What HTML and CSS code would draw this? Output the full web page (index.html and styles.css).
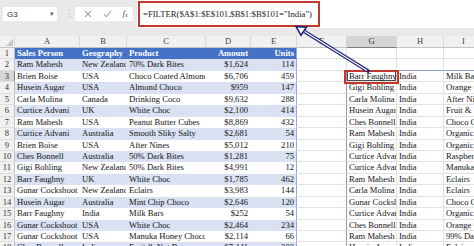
FILE: index.html
```html
<!DOCTYPE html>
<html>
<head>
<meta charset="utf-8">
<link rel="stylesheet" href="styles.css">
</head>
<body>
<div class="toolbar">
  <div class="namebox"><span>G3</span><span class="dd">&#9662;</span></div>
  <div class="sep">&#8942;</div>
  <div class="fnbtns">
    <svg width="8" height="8" viewBox="0 0 8 8"><path d="M1 1L7 7M7 1L1 7" stroke="#a8a8a8" stroke-width="1.1" fill="none"/></svg>
    <svg width="9" height="8" viewBox="0 0 9 8"><path d="M1 4.2L3.4 6.6L8 1.2" stroke="#a8a8a8" stroke-width="1.1" fill="none"/></svg>
    <span class="fx">f<sub>x</sub></span>
  </div>
  <div class="formula"><div class="fbox">=FILTER($A$1:$E$101,$B$1:$B$101="India")</div></div>
</div>
<div class="sheet">
  <div class="ch corner"><svg width="7" height="7" viewBox="0 0 7 7"><path d="M7 0V7H0Z" fill="#c4c4c4"/></svg></div>
  <div class="ch">A</div><div class="ch">B</div><div class="ch">C</div><div class="ch">D</div><div class="ch">E</div><div class="ch">F</div><div class="ch csel">G</div><div class="ch">H</div><div class="ch">I</div>

  <div class="rn">1</div><div class="c h">Sales Person</div><div class="c h">Geography</div><div class="c h">Product</div><div class="c h r">Amount</div><div class="c h r e">Units</div><div class="c"></div><div class="c"></div><div class="c"></div><div class="c"></div>

  <div class="rn">2</div><div class="c t b">Ram Mahesh</div><div class="c t b">New Zealand</div><div class="c t b">70% Dark Bites</div><div class="c t b r">$1,624</div><div class="c t b r e">114</div><div class="c"></div><div class="c spb"></div><div class="c spb"></div><div class="c spb"></div>

  <div class="rn rsel">3</div><div class="c t">Brien Boise</div><div class="c t">USA</div><div class="c t">Choco Coated Almonds</div><div class="c t r">$6,706</div><div class="c t r e">459</div><div class="c sp"></div><div class="c gsel">Barr Faughny</div><div class="c">India</div><div class="c">Milk Bars</div>

  <div class="rn">4</div><div class="c t b">Husein Augar</div><div class="c t b">USA</div><div class="c t b">Almond Choco</div><div class="c t b r">$959</div><div class="c t b r e">147</div><div class="c sp"></div><div class="c">Gigi Bohling</div><div class="c">India</div><div class="c">Orange Choco</div>

  <div class="rn">5</div><div class="c t">Carla Molina</div><div class="c t">Canada</div><div class="c t">Drinking Coco</div><div class="c t r">$9,632</div><div class="c t r e">288</div><div class="c sp"></div><div class="c">Carla Molina</div><div class="c">India</div><div class="c">After Nines</div>

  <div class="rn">6</div><div class="c t b">Curtice Advani</div><div class="c t b">UK</div><div class="c t b">White Choc</div><div class="c t b r">$2,100</div><div class="c t b r e">414</div><div class="c sp"></div><div class="c">Husein Augar</div><div class="c">India</div><div class="c">Fruit &amp; Nut Bars</div>

  <div class="rn">7</div><div class="c t">Ram Mahesh</div><div class="c t">USA</div><div class="c t">Peanut Butter Cubes</div><div class="c t r">$8,869</div><div class="c t r e">432</div><div class="c sp"></div><div class="c">Ches Bonnell</div><div class="c">India</div><div class="c">Choco Coated</div>

  <div class="rn">8</div><div class="c t b">Curtice Advani</div><div class="c t b">Australia</div><div class="c t b">Smooth Sliky Salty</div><div class="c t b r">$2,681</div><div class="c t b r e">54</div><div class="c sp"></div><div class="c">Ram Mahesh</div><div class="c">India</div><div class="c">Organic Choco</div>

  <div class="rn">9</div><div class="c t">Brien Boise</div><div class="c t">USA</div><div class="c t">After Nines</div><div class="c t r">$5,012</div><div class="c t r e">210</div><div class="c sp"></div><div class="c">Gigi Bohling</div><div class="c">India</div><div class="c">Organic Choco</div>

  <div class="rn">10</div><div class="c t b">Ches Bonnell</div><div class="c t b">Australia</div><div class="c t b">50% Dark Bites</div><div class="c t b r">$1,281</div><div class="c t b r e">75</div><div class="c sp"></div><div class="c">Curtice Advani</div><div class="c">India</div><div class="c">Raspberry Choco</div>

  <div class="rn">11</div><div class="c t">Gigi Bohling</div><div class="c t">New Zealand</div><div class="c t">50% Dark Bites</div><div class="c t r">$4,991</div><div class="c t r e">12</div><div class="c sp"></div><div class="c">Curtice Advani</div><div class="c">India</div><div class="c">Manuka Honey</div>

  <div class="rn">12</div><div class="c t b">Barr Faughny</div><div class="c t b">UK</div><div class="c t b">White Choc</div><div class="c t b r">$1,785</div><div class="c t b r e">462</div><div class="c sp"></div><div class="c">Ram Mahesh</div><div class="c">India</div><div class="c">Eclairs</div>

  <div class="rn">13</div><div class="c t">Gunar Cockshoot</div><div class="c t">New Zealand</div><div class="c t">Eclairs</div><div class="c t r">$3,983</div><div class="c t r e">144</div><div class="c sp"></div><div class="c">Carla Molina</div><div class="c">India</div><div class="c">Eclairs</div>

  <div class="rn">14</div><div class="c t b">Husein Augar</div><div class="c t b">Australia</div><div class="c t b">Mint Chip Choco</div><div class="c t b r">$2,646</div><div class="c t b r e">120</div><div class="c sp"></div><div class="c">Gunar Cockshoot</div><div class="c">India</div><div class="c">Choco Coated</div>

  <div class="rn">15</div><div class="c t">Barr Faughny</div><div class="c t">India</div><div class="c t">Milk Bars</div><div class="c t r">$252</div><div class="c t r e">54</div><div class="c sp"></div><div class="c">Curtice Advani</div><div class="c">India</div><div class="c">Organic Choco</div>

  <div class="rn">16</div><div class="c t b">Gunar Cockshoot</div><div class="c t b">USA</div><div class="c t b">White Choc</div><div class="c t b r">$2,464</div><div class="c t b r e">234</div><div class="c sp"></div><div class="c">Ches Bonnell</div><div class="c">India</div><div class="c">Orange Choco</div>

  <div class="rn">17</div><div class="c t">Gunar Cockshoot</div><div class="c t">USA</div><div class="c t">Manuka Honey Choco</div><div class="c t r">$2,114</div><div class="c t r e">66</div><div class="c sp"></div><div class="c">Ram Mahesh</div><div class="c">India</div><div class="c">99% Dark &amp; Pure</div>

  <div class="rn">18</div><div class="c t b">Ches Bonnell</div><div class="c t b">India</div><div class="c t b">Fruit &amp; Nut Bars</div><div class="c t b r">$7,441</div><div class="c t b r e">303</div><div class="c sp"></div><div class="c">Husein Augar</div><div class="c">India</div><div class="c">Eclairs</div>
</div>
<svg class="arrow" width="474" height="246" viewBox="0 0 474 246">
  <path d="M368 71L302 30" stroke="#1c237a" stroke-width="3.6" fill="none" stroke-linecap="round"/>
  <path d="M367 70.4L303 30.6" stroke="#ffffff" stroke-width="1.2" fill="none"/>
  <path d="M306.5 27.2L296 26.5L301 35.3Z" fill="#ffffff" stroke="#1c237a" stroke-width="1.6" stroke-linejoin="miter"/>
</svg>
</body>
</html>
```

FILE: styles.css
```css
html, body {
  margin: 0;
  padding: 0;
}
body {
  width: 474px;
  height: 246px;
  overflow: hidden;
  background: #ffffff;
  font-family: "Liberation Serif", "Times New Roman", serif;
  position: relative;
}

.toolbar {
  height: 36px;
  background: #e9e9e9;
  display: flex;
  align-items: flex-start;
}
.namebox {
  margin: 7px 0 0 3px;
  width: 54px;
  height: 14px;
  background: #ffffff;
  display: flex;
  align-items: center;
  justify-content: space-between;
  padding: 0 3px 0 4px;
  box-sizing: border-box;
  font-family: "Liberation Sans", Arial, sans-serif;
  font-size: 8px;
  color: #333333;
}
.dd {
  font-size: 7px;
  color: #666666;
}
.sep {
  margin: 8px 0 0 8px;
  width: 4px;
  font-size: 9px;
  line-height: 12px;
  color: #b0b0b0;
}
.fnbtns {
  margin: 7px 0 0 6px;
  width: 58px;
  height: 14px;
  background: #ffffff;
  display: flex;
  align-items: center;
  justify-content: space-around;
  padding-left: 4px;
  box-sizing: border-box;
}
.fx {
  font-style: italic;
  font-size: 9px;
  color: #555555;
  line-height: 10px;
}
.fx sub {
  font-size: 6px;
  vertical-align: -1px;
}
.formula {
  margin-left: 4px;
  flex: 1;
  height: 28px;
  background: #ffffff;
}
.fbox {
  margin: 1px 0 0 1px;
  width: 182px;
  height: 26px;
  border: 2px solid #c0392b;
  box-sizing: border-box;
  font-size: 8.7px;
  line-height: 22px;
  padding-left: 3px;
  color: #1a1a1a;
  white-space: nowrap;
  overflow: hidden;
}

.sheet {
  display: grid;
  grid-template-columns: 15px 65px 47px 79px 45px 46px 50px 50px 47px 40px;
  grid-template-rows: 12px;
  grid-auto-rows: 11.45px;
}
.ch {
  background: #f1f1f1;
  text-align: center;
  font-size: 8.6px;
  line-height: 11px;
  color: #444444;
  border-right: 1px solid #d6d6d6;
  border-bottom: 1px solid #c4c4c4;
  box-sizing: border-box;
}
.corner {
  display: flex;
  align-items: flex-end;
  justify-content: flex-end;
  padding: 0 1px 1px 0;
}
.csel {
  background: #d5d5d5;
  border-bottom: 1px solid #7f7f7f;
  color: #333333;
}
.rn {
  background: #f1f1f1;
  text-align: center;
  font-size: 8.6px;
  line-height: 10.45px;
  color: #333333;
  border-right: 1px solid #c4c4c4;
  border-bottom: 1px solid #dedede;
  box-sizing: border-box;
}
.rsel {
  background: #d5d5d5;
  border-right: 1px solid #7f7f7f;
}
.c {
  font-size: 8.6px;
  line-height: 10.45px;
  color: #141414;
  padding: 0 2px;
  white-space: nowrap;
  overflow: hidden;
  border-right: 1px solid #e1e1e1;
  border-bottom: 1px solid #e1e1e1;
  box-sizing: border-box;
}
.t {
  border-right-color: transparent;
  border-bottom-color: transparent;
}
.b {
  background: #d9e1f2;
}
.h {
  background: #4472c4;
  color: #ffffff;
  font-weight: bold;
  border-right-color: transparent;
  border-bottom-color: transparent;
}
.r {
  text-align: right;
}
.e {
  border-right: 1px solid #8ea9db;
}
.sp {
  border-right-color: #8c9cc4;
}
.spb {
  border-bottom-color: #8c9cc4;
}
.gsel {
  position: relative;
  overflow: visible;
  box-shadow: inset 0 0 0 1px #4a4a4a;
  z-index: 2;
  background: #ffffff;
}
.gsel::after {
  content: "";
  position: absolute;
  left: -3px;
  top: -1px;
  right: -3px;
  bottom: -3px;
  border: 2px solid #c0392b;
}
.arrow {
  position: absolute;
  left: 0;
  top: 0;
  pointer-events: none;
  z-index: 5;
}
```
